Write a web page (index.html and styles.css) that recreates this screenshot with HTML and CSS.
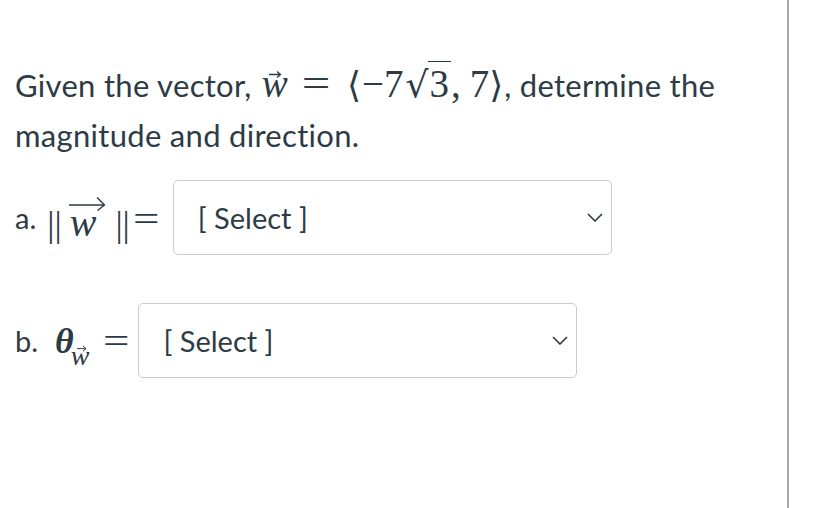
FILE: index.html
```html
<!DOCTYPE html>
<html>
<head>
<meta charset="utf-8">
<link rel="stylesheet" href="styles.css">
</head>
<body>
<div class="page">
  <p class="q">Given the vector, <span class="m"><span class="vec">w<svg class="sarrow" viewBox="0 0 14 8" width="14" height="8"><path d="M1 4.5H12M9 1.5L12.5 4.5L9 7.5" fill="none" stroke="#2d3b45" stroke-width="1.3"/></svg></span><span class="op"><span class="eq">=</span></span><span class="ang">⟨</span>−7<span class="sqrt"><span class="rad">√</span><span class="rc">3</span></span>,<span class="sp"></span>7<span class="ang">⟩</span></span>, determine the magnitude and direction.</p>

  <div class="row row-a">
    <span class="lbl">a.</span>
    <span class="m ma"><span class="bar">||</span><span class="vec big">w<svg class="larrow" viewBox="0 0 38 18" width="38" height="18"><path d="M1 11H36M29 3.5L36.5 11L29.5 16.5" fill="none" stroke="#2d3b45" stroke-width="1.4"/></svg></span><span class="bar">||</span><span class="op"><span class="eq">=</span></span></span>
    <div class="select"><span class="ph">[ Select ]</span><svg class="chev" viewBox="0 0 16 9" width="16" height="9"><path d="M1 1L8 8L15 1" fill="none" stroke="#2d3b45" stroke-width="1.6"/></svg></div>
  </div>

  <div class="row row-b">
    <span class="lbl">b.</span>
    <span class="m mb"><span class="theta">θ</span><span class="sub"><span class="vec">w<svg class="tarrow" viewBox="0 0 11 7" width="11" height="7"><path d="M1 3.6H9.5M7 1L10 3.6L7 6.2" fill="none" stroke="#2d3b45" stroke-width="1"/></svg></span></span><span class="op"><span class="eq">=</span></span></span>
    <div class="select"><span class="ph">[ Select ]</span><svg class="chev" viewBox="0 0 16 9" width="16" height="9"><path d="M1 1L8 8L15 1" fill="none" stroke="#2d3b45" stroke-width="1.6"/></svg></div>
  </div>
</div>
</body>
</html>
```

FILE: styles.css
```css
html, body {
  margin: 0;
  padding: 0;
  background: #ffffff;
}
.page {
  width: 787px;
  height: 508px;
  border-right: 2px solid #a9a9a9;
  box-sizing: content-box;
  font-family: Lato, "Noto Sans", sans-serif;
  color: #2d3b45;
  overflow: hidden;
}
.q {
  margin: 59px 0 0 0;
  padding: 0 20px 0 15px;
  font-size: 31px;
  letter-spacing: 0.3px;
  line-height: 50px;
}
.m {
  font-family: "Liberation Serif", "DejaVu Serif", serif;
  font-size: 39px;
  letter-spacing: 0;
}
.vec {
  position: relative;
  display: inline-block;
  font-style: italic;
  margin-left: 2px;
}
.sarrow {
  position: absolute;
  left: 6px;
  top: 11px;
}
.op {
  display: inline-block;
  width: 29px;
  text-align: center;
  margin: 0 16px 0 14px;
}
.eq {
  display: inline-block;
  transform: scaleX(1.3);
}
.ang {
  font-family: "DejaVu Serif", serif;
  font-size: 36px;
  font-weight: 300;
  margin-right: 1px;
}
.sqrt {
  display: inline-block;
}
.rad {
  font-family: "DejaVu Serif", serif;
  font-size: 36px;
  margin-left: 2px;
}
.rc {
  border-top: 1.5px solid #2d3b45;
  padding: 0 2px 0 1px;
}
.sp {
  display: inline-block;
  width: 9px;
}
.row {
  display: flex;
  align-items: center;
  padding-left: 15px;
}
.row-a {
  margin-top: 20px;
}
.row-b {
  margin-top: 48px;
}
.lbl {
  font-size: 29px;
}
.ma {
  display: flex;
  align-items: baseline;
  margin: 10px 0 0 11px;
  font-size: 36px;
}
.bar {
  font-family: "Liberation Serif", serif;
  font-size: 36px;
}
.vec.big {
  font-size: 40px;
  margin: 0 19px 0 8px;
}
.larrow {
  position: absolute;
  left: -2px;
  top: -5px;
}
.ma .op {
  width: 25px;
  margin: 0 14px 0 4px;
  position: relative;
  top: -5px;
}
.mb {
  display: block;
  height: 42px;
  margin-left: 17px;
  font-size: 36px;
  line-height: 42px;
  white-space: nowrap;
}
.theta {
  font-style: italic;
  font-weight: bold;
}
.sub {
  display: inline-block;
  font-size: 28px;
  line-height: 1;
  vertical-align: -12px;
}
.sub .vec {
  margin-left: -3px;
}
.tarrow {
  position: absolute;
  left: 5px;
  top: 3px;
}
.mb .op {
  width: 25px;
  margin: 0 10px 0 14px;
}
.select {
  width: 439px;
  height: 75px;
  box-sizing: border-box;
  border: 1.5px solid #c7cdd1;
  border-radius: 5px;
  display: flex;
  align-items: center;
  justify-content: space-between;
  padding: 0 8px 0 24px;
}
.ph {
  font-size: 29px;
}
.chev {
  display: block;
}
```
